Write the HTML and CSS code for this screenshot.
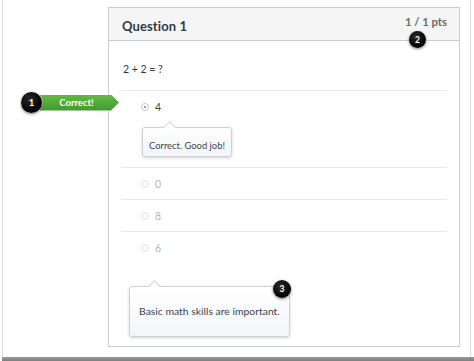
FILE: index.html
```html
<!DOCTYPE html>
<html lang="en">
<head>
<meta charset="utf-8">
<title>Question 1</title>
<link rel="stylesheet" href="styles.css">
</head>
<body>
<div class="shot">
  <div class="frame">
    <div class="card">
      <div class="card-head">
        <h2 class="title">Question 1</h2>
        <span class="pts">1 / 1 pts</span>
        <span class="badge badge-2">2</span>
      </div>
      <div class="card-body">
        <p class="question">2 + 2 = ?</p>
        <div class="answer">
          <div class="opt selected"><span class="radio checked"></span><span class="opt-text">4</span></div>
          <div class="tip tip-answer">Correct. Good job!</div>
        </div>
        <div class="answer">
          <div class="opt"><span class="radio"></span><span class="opt-text">0</span></div>
        </div>
        <div class="answer">
          <div class="opt"><span class="radio"></span><span class="opt-text">8</span></div>
        </div>
        <div class="answer">
          <div class="opt"><span class="radio"></span><span class="opt-text">6</span></div>
          <div class="tip tip-general">Basic math skills are important.<span class="badge badge-3">3</span></div>
        </div>
      </div>
    </div>
  </div>
  <div class="shadow-bar"></div>
  <div class="flag">
    <span class="badge badge-1">1</span>
    <span class="flag-label">Correct!</span>
  </div>
</div>
</body>
</html>
```
FILE: styles.css
```css
* { box-sizing: border-box; }
html, body { margin: 0; padding: 0; background: #fff; }
body { font-family: Lato, "Noto Sans", sans-serif; color: #2d3b45; }

.shot { position: relative; width: 474px; height: 361px; overflow: hidden; }

.frame {
  margin-left: 2px;
  width: 469px;
  height: 357px;
  border-left: 1px solid #e2e2e2;
  border-right: 1px solid #dcdcdc;
  padding: 7px 0 0 105px;
}

.shadow-bar {
  margin-left: 2px;
  height: 4px;
  background: linear-gradient(#9a9a9a, #7d7d7d);
}

.card {
  position: relative;
  width: 352px;
  border: 1px solid #c9cdd0;
  background: #fff;
}

.card-head {
  display: flex;
  justify-content: space-between;
  align-items: flex-start;
  height: 33px;
  padding: 0 12px 0 13px;
  background: #f5f5f5;
  border-bottom: 1px solid #c9cdd0;
}

.title {
  margin: 8px 0 0;
  font-size: 13px;
  line-height: 20px;
  font-weight: 700;
  color: #2d3b45;
  letter-spacing: 0.1px;
}

.pts {
  margin-top: 6px;
  font-size: 11.3px;
  line-height: 16px;
  font-weight: 700;
  color: #6b6b6b;
}

.card-body { padding: 0 12px 9px; }

.question {
  margin: 0;
  padding: 20px 0 13px 2px;
  font-size: 10.5px;
  line-height: 16px;
  color: #2d3b45;
}

.answer { border-top: 1px solid #e8eaec; }

.opt {
  display: flex;
  align-items: center;
  height: 31px;
  padding-left: 20px;
  gap: 6px;
  font-size: 10.5px;
  color: #b4b4b4;
}
.opt.selected { color: #444; }

.radio {
  position: relative;
  width: 8px;
  height: 8px;
  border-radius: 50%;
  border: 1px solid #e6e6e6;
  background: #fafafa;
}
.radio.checked { border-color: #c4c4c4; background: #fff; }
.radio.checked::after {
  content: "";
  position: absolute;
  left: 2px; top: 2px;
  width: 2px; height: 2px;
  border-radius: 50%;
  background: #777;
}

.tip {
  position: relative;
  border: 1px solid #cfd2d5;
  border-radius: 3px;
  background: linear-gradient(#ffffff, #f3f5f7);
  box-shadow: 0 1px 3px rgba(0,0,0,0.18);
  color: #3d454c;
}
.tip::before {
  content: "";
  position: absolute;
  top: -5px;
  width: 8px;
  height: 8px;
  background: #fff;
  border-top: 1px solid #cfd2d5;
  border-left: 1px solid #cfd2d5;
  transform: rotate(45deg);
}

.tip-answer {
  width: 90px;
  margin: 5px 0 10px 21px;
  padding: 11px 0 3px 6px;
  font-size: 9.4px;
  line-height: 14px;
  white-space: nowrap;
}
.tip-answer::before { left: 22px; }

.tip-general {
  width: 161px;
  height: 51px;
  margin: 23px 0 0 8px;
  padding: 16px 0 0 9px;
  font-size: 10.4px;
  line-height: 17px;
  white-space: nowrap;
}
.tip-general::before { left: 20px; }

.badge {
  position: absolute;
  display: flex;
  align-items: center;
  justify-content: center;
  border-radius: 50%;
  background: radial-gradient(circle at 40% 35%, #2a2a2a, #000 70%);
  color: #fff;
  font-weight: 700;
  box-shadow: 0 1px 3px rgba(0,0,0,0.55), 0 0 0 1px rgba(255,255,255,0.6);
}
.badge-2 { left: 300px; top: 23px; width: 17px; height: 17px; font-size: 8.5px; }
.badge-3 { left: 143px; top: -7px; width: 18px; height: 18px; font-size: 8.5px; }
.badge-1 { position: relative; z-index: 1; width: 21px; height: 21px; font-size: 9.5px; flex: none; }

.flag {
  position: absolute;
  left: 21px;
  top: 92px;
  display: flex;
  align-items: center;
}
.flag-label {
  margin-left: -2px;
  width: 79px;
  height: 16px;
  padding: 0 8px 0 2px;
  background: linear-gradient(#63b947, #409a2b);
  clip-path: polygon(0 0, 71px 0, 79px 8px, 71px 16px, 0 16px);
  color: #fff;
  font-size: 9.5px;
  font-weight: 700;
  line-height: 16px;
  text-align: center;
}
```
